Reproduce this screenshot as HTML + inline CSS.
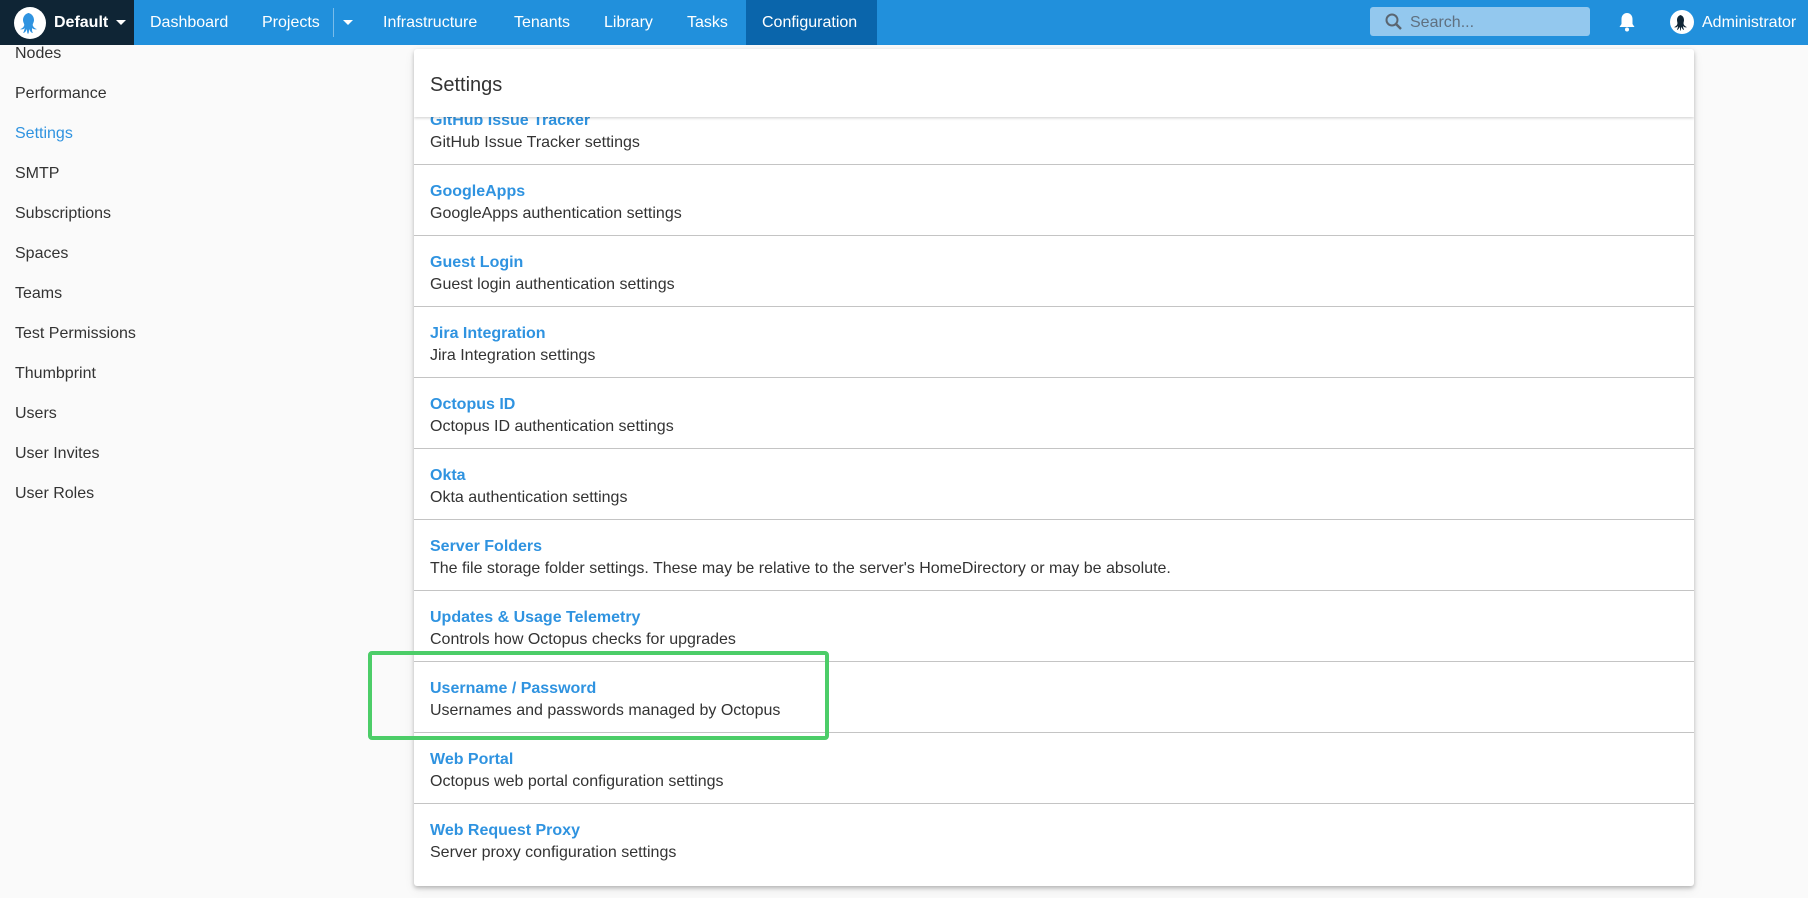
<!DOCTYPE html>
<html><head><meta charset="utf-8">
<style>
*{margin:0;padding:0;box-sizing:border-box}
body{width:1808px;height:898px;background:#fafafa;font-family:"Liberation Sans",sans-serif;position:relative;overflow:hidden;color:#333}
.nav{position:absolute;left:0;top:0;width:1808px;height:45px;background:#2190dc}
.nav .t{position:absolute;top:0;line-height:45px;color:#fff;font-size:16px}
.side{position:absolute;left:15px;font-size:16px;color:#333;line-height:20px}
.card{position:absolute;left:414px;top:49px;width:1280px;height:837px;background:#fff;border-radius:3px;box-shadow:0 2px 4px rgba(0,0,0,.25),0 4px 12px rgba(0,0,0,.06);overflow:hidden}
.hdr{position:absolute;left:0;top:0;width:1280px;height:68px;background:#fff;box-shadow:0 1px 3px rgba(0,0,0,.2);z-index:2}
.row{position:absolute;left:0;width:1280px;height:71px;border-bottom:1px solid #c4c4c4}
.row .a{position:absolute;left:16px;top:17px;font-size:16px;font-weight:bold;color:#2f93e0;line-height:20px}
.row .b{position:absolute;left:16px;top:39px;font-size:16px;color:#333;line-height:20px}
</style></head><body>
<div class="nav">
 <div style="position:absolute;left:0;top:0;width:134px;height:45px;background:#0f2535"></div>
 <svg style="position:absolute;left:14px;top:7px" width="32" height="32" viewBox="0 0 32 32"><circle cx="16" cy="16" r="16" fill="#fff"/><path d="M16 6c-5 0-7 4-7 7 0 3 2 4 1 6-1 2-3 3-4 3 2 1 4 0 5-1-1 2-1 4-2 5 2 0 3-2 4-4 0 2 0 4 1 5 1-1 1-3 1-5 1 2 2 4 4 4-1-1-1-3-1-5 1 1 3 2 5 1-1 0-3-1-4-3-1-2 1-3 1-6 0-3-2-7-7-7z" fill="#2f93e0"/></svg>
 <div class="t" style="left:54px;font-weight:bold">Default</div>
 <div style="position:absolute;left:116px;top:20px;border:5px solid transparent;border-top:5px solid #fff;border-bottom:0"></div>
 <div class="t" style="left:150px">Dashboard</div>
 <div class="t" style="left:262px">Projects</div>
 <div style="position:absolute;left:333px;top:8px;width:1px;height:29px;background:rgba(255,255,255,.4)"></div>
 <div style="position:absolute;left:343px;top:20px;border:5px solid transparent;border-top:5px solid #fff;border-bottom:0"></div>
 <div class="t" style="left:383px">Infrastructure</div>
 <div class="t" style="left:514px">Tenants</div>
 <div class="t" style="left:604px">Library</div>
 <div class="t" style="left:687px">Tasks</div>
 <div style="position:absolute;left:746px;top:0;width:131px;height:45px;background:#0a65ab"></div>
 <div class="t" style="left:762px">Configuration</div>
 <div style="position:absolute;left:1370px;top:7px;width:220px;height:29px;background:#93c8ee;border-radius:3px"></div>
 <svg style="position:absolute;left:1384px;top:12px" width="20" height="20" viewBox="0 0 20 20"><circle cx="8" cy="8" r="5.5" fill="none" stroke="#5a6570" stroke-width="2"/><path d="M12 12l5 5" stroke="#5a6570" stroke-width="2.4"/></svg>
 <div class="t" style="left:1410px;color:#5f7080">Search...</div>
 <svg style="position:absolute;left:1617px;top:11px" width="20" height="22" viewBox="0 0 20 22"><path d="M10 2c-3.5 0-5.5 3-5.5 6v5l-2 3h15l-2-3V8c0-3-2-6-5.5-6z" fill="#fff"/><circle cx="10" cy="18.5" r="2" fill="#fff"/></svg>
 <svg style="position:absolute;left:1670px;top:10px" width="24" height="24" viewBox="0 0 24 24"><circle cx="12" cy="12" r="12" fill="#fff"/><path d="M12 5c-4 0-5 3-5 5 0 2 1 3 0 5-1 1-2 2-3 2 2 1 3 0 4-1 0 2-1 3-1 4 1 0 2-2 3-3v4c1-1 1-2 1-4 1 1 2 3 3 3 0-1-1-2-1-4 1 1 2 2 4 1-1 0-2-1-3-2-1-2 0-3 0-5 0-2-1-5-5-5z" fill="#0f2535"/></svg>
 <div class="t" style="left:1702px">Administrator</div>
</div>

<div class="side" style="top:44px">Nodes</div>
<div class="side" style="top:84px">Performance</div>
<div class="side" style="top:124px;color:#2f93e0">Settings</div>
<div class="side" style="top:164px">SMTP</div>
<div class="side" style="top:204px">Subscriptions</div>
<div class="side" style="top:244px">Spaces</div>
<div class="side" style="top:284px">Teams</div>
<div class="side" style="top:324px">Test Permissions</div>
<div class="side" style="top:364px">Thumbprint</div>
<div class="side" style="top:404px">Users</div>
<div class="side" style="top:444px">User Invites</div>
<div class="side" style="top:484px">User Roles</div>

<div class="card">
 <div class="hdr"><div style="position:absolute;left:16px;top:25px;font-size:20px;color:#333">Settings</div></div>
 <div class="row" style="top:45px"><div class="a">GitHub Issue Tracker</div><div class="b">GitHub Issue Tracker settings</div></div>
 <div class="row" style="top:116px"><div class="a">GoogleApps</div><div class="b">GoogleApps authentication settings</div></div>
 <div class="row" style="top:187px"><div class="a">Guest Login</div><div class="b">Guest login authentication settings</div></div>
 <div class="row" style="top:258px"><div class="a">Jira Integration</div><div class="b">Jira Integration settings</div></div>
 <div class="row" style="top:329px"><div class="a">Octopus ID</div><div class="b">Octopus ID authentication settings</div></div>
 <div class="row" style="top:400px"><div class="a">Okta</div><div class="b">Okta authentication settings</div></div>
 <div class="row" style="top:471px"><div class="a">Server Folders</div><div class="b">The file storage folder settings. These may be relative to the server's HomeDirectory or may be absolute.</div></div>
 <div class="row" style="top:542px"><div class="a">Updates &amp; Usage Telemetry</div><div class="b">Controls how Octopus checks for upgrades</div></div>
 <div class="row" style="top:613px"><div class="a">Username / Password</div><div class="b">Usernames and passwords managed by Octopus</div></div>
 <div class="row" style="top:684px"><div class="a">Web Portal</div><div class="b">Octopus web portal configuration settings</div></div>
 <div class="row" style="top:755px;border-bottom:0"><div class="a">Web Request Proxy</div><div class="b">Server proxy configuration settings</div></div>
</div>

<div style="position:absolute;left:368px;top:651px;width:461px;height:89px;border:4px solid #4ccd68;border-radius:4px"></div>
</body></html>
